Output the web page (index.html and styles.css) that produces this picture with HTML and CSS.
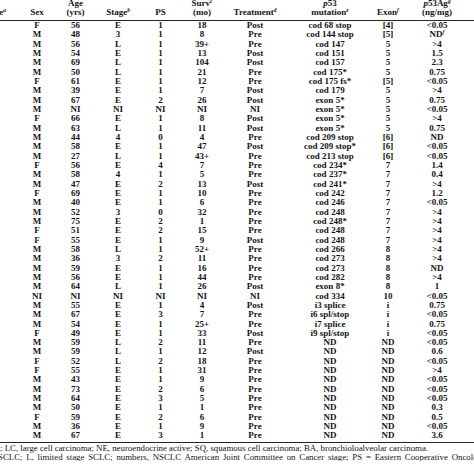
FILE: index.html
```html
<!DOCTYPE html>
<html>
<head>
<meta charset="utf-8">
<link rel="stylesheet" href="styles.css">
</head>
<body>
<div class="sheet">
  <div class="table">
    <div class="row head">
      <div class="cell clip"><span>Cell type<sup>a</sup></span></div>
      <div class="cell">Sex</div>
      <div class="cell">Age<br>(yrs)</div>
      <div class="cell">Stage<sup>b</sup></div>
      <div class="cell">PS</div>
      <div class="cell">Surv<sup>c</sup><br>(mo)</div>
      <div class="cell">Treatment<sup>d</sup></div>
      <div class="cell"><i>p</i>53<br>mutation<sup>e</sup></div>
      <div class="cell">Exon<sup>f</sup></div>
      <div class="cell"><i>p</i>53Ag<sup>g</sup><br>(ng/mg)</div>
    </div>
    <div class="body">
      <div class="row"><div class="cell"></div><div class="cell">F</div><div class="cell">56</div><div class="cell">E</div><div class="cell">1</div><div class="cell">18</div><div class="cell">Post</div><div class="cell">cod 68 stop</div><div class="cell">[4]</div><div class="cell">&lt;0.05</div></div>
      <div class="row"><div class="cell"></div><div class="cell">M</div><div class="cell">48</div><div class="cell">3</div><div class="cell">1</div><div class="cell">8</div><div class="cell">Pre</div><div class="cell">cod 144 stop</div><div class="cell">[5]</div><div class="cell">ND<sup>f</sup></div></div>
      <div class="row"><div class="cell"></div><div class="cell">M</div><div class="cell">56</div><div class="cell">L</div><div class="cell">1</div><div class="cell">39+</div><div class="cell">Pre</div><div class="cell">cod 147</div><div class="cell">5</div><div class="cell">&gt;4</div></div>
      <div class="row"><div class="cell"></div><div class="cell">M</div><div class="cell">54</div><div class="cell">E</div><div class="cell">1</div><div class="cell">13</div><div class="cell">Post</div><div class="cell">cod 151</div><div class="cell">5</div><div class="cell">1.5</div></div>
      <div class="row"><div class="cell"></div><div class="cell">M</div><div class="cell">69</div><div class="cell">L</div><div class="cell">1</div><div class="cell">104</div><div class="cell">Post</div><div class="cell">cod 157</div><div class="cell">5</div><div class="cell">2.3</div></div>
      <div class="row"><div class="cell"></div><div class="cell">M</div><div class="cell">50</div><div class="cell">L</div><div class="cell">1</div><div class="cell">21</div><div class="cell">Pre</div><div class="cell">cod 175*</div><div class="cell">5</div><div class="cell">0.75</div></div>
      <div class="row"><div class="cell"></div><div class="cell">F</div><div class="cell">61</div><div class="cell">E</div><div class="cell">1</div><div class="cell">12</div><div class="cell">Pre</div><div class="cell">cod 175 fs*</div><div class="cell">[5]</div><div class="cell">&lt;0.05</div></div>
      <div class="row"><div class="cell"></div><div class="cell">M</div><div class="cell">39</div><div class="cell">E</div><div class="cell">1</div><div class="cell">7</div><div class="cell">Post</div><div class="cell">cod 179</div><div class="cell">5</div><div class="cell">&gt;4</div></div>
      <div class="row"><div class="cell"></div><div class="cell">M</div><div class="cell">67</div><div class="cell">E</div><div class="cell">2</div><div class="cell">26</div><div class="cell">Post</div><div class="cell">exon 5*</div><div class="cell">5</div><div class="cell">0.75</div></div>
      <div class="row"><div class="cell"></div><div class="cell">M</div><div class="cell">NI</div><div class="cell">NI</div><div class="cell">NI</div><div class="cell">NI</div><div class="cell">NI</div><div class="cell">exon 5*</div><div class="cell">5</div><div class="cell">&lt;0.05</div></div>
      <div class="row"><div class="cell"></div><div class="cell">F</div><div class="cell">66</div><div class="cell">E</div><div class="cell">1</div><div class="cell">8</div><div class="cell">Post</div><div class="cell">exon 5*</div><div class="cell">5</div><div class="cell">&gt;4</div></div>
      <div class="row"><div class="cell"></div><div class="cell">M</div><div class="cell">63</div><div class="cell">L</div><div class="cell">1</div><div class="cell">11</div><div class="cell">Post</div><div class="cell">exon 5*</div><div class="cell">5</div><div class="cell">0.75</div></div>
      <div class="row"><div class="cell"></div><div class="cell">M</div><div class="cell">44</div><div class="cell">4</div><div class="cell">0</div><div class="cell">4</div><div class="cell">Pre</div><div class="cell">cod 209 stop</div><div class="cell">[6]</div><div class="cell">ND</div></div>
      <div class="row"><div class="cell"></div><div class="cell">M</div><div class="cell">58</div><div class="cell">E</div><div class="cell">1</div><div class="cell">47</div><div class="cell">Post</div><div class="cell">cod 209 stop*</div><div class="cell">[6]</div><div class="cell">&lt;0.05</div></div>
      <div class="row"><div class="cell"></div><div class="cell">M</div><div class="cell">27</div><div class="cell">L</div><div class="cell">1</div><div class="cell">43+</div><div class="cell">Pre</div><div class="cell">cod 213 stop</div><div class="cell">[6]</div><div class="cell">&lt;0.05</div></div>
      <div class="row"><div class="cell"></div><div class="cell">F</div><div class="cell">56</div><div class="cell">E</div><div class="cell">4</div><div class="cell">7</div><div class="cell">Pre</div><div class="cell">cod 234*</div><div class="cell">7</div><div class="cell">1.4</div></div>
      <div class="row"><div class="cell"></div><div class="cell">M</div><div class="cell">58</div><div class="cell">4</div><div class="cell">1</div><div class="cell">5</div><div class="cell">Pre</div><div class="cell">cod 237*</div><div class="cell">7</div><div class="cell">0.4</div></div>
      <div class="row"><div class="cell"></div><div class="cell">M</div><div class="cell">47</div><div class="cell">E</div><div class="cell">2</div><div class="cell">13</div><div class="cell">Post</div><div class="cell">cod 241*</div><div class="cell">7</div><div class="cell">&gt;4</div></div>
      <div class="row"><div class="cell"></div><div class="cell">F</div><div class="cell">69</div><div class="cell">E</div><div class="cell">1</div><div class="cell">10</div><div class="cell">Pre</div><div class="cell">cod 242</div><div class="cell">7</div><div class="cell">1.2</div></div>
      <div class="row"><div class="cell"></div><div class="cell">M</div><div class="cell">40</div><div class="cell">E</div><div class="cell">1</div><div class="cell">6</div><div class="cell">Pre</div><div class="cell">cod 246</div><div class="cell">7</div><div class="cell">&lt;0.05</div></div>
      <div class="row"><div class="cell"></div><div class="cell">M</div><div class="cell">52</div><div class="cell">3</div><div class="cell">0</div><div class="cell">32</div><div class="cell">Pre</div><div class="cell">cod 248</div><div class="cell">7</div><div class="cell">&gt;4</div></div>
      <div class="row"><div class="cell"></div><div class="cell">M</div><div class="cell">75</div><div class="cell">E</div><div class="cell">2</div><div class="cell">1</div><div class="cell">Pre</div><div class="cell">cod 248*</div><div class="cell">7</div><div class="cell">&gt;4</div></div>
      <div class="row"><div class="cell"></div><div class="cell">F</div><div class="cell">51</div><div class="cell">E</div><div class="cell">2</div><div class="cell">15</div><div class="cell">Pre</div><div class="cell">cod 248</div><div class="cell">7</div><div class="cell">&gt;4</div></div>
      <div class="row"><div class="cell"></div><div class="cell">F</div><div class="cell">55</div><div class="cell">E</div><div class="cell">1</div><div class="cell">9</div><div class="cell">Post</div><div class="cell">cod 248</div><div class="cell">7</div><div class="cell">&gt;4</div></div>
      <div class="row"><div class="cell"></div><div class="cell">M</div><div class="cell">58</div><div class="cell">L</div><div class="cell">1</div><div class="cell">52+</div><div class="cell">Pre</div><div class="cell">cod 266</div><div class="cell">8</div><div class="cell">&gt;4</div></div>
      <div class="row"><div class="cell"></div><div class="cell">M</div><div class="cell">36</div><div class="cell">3</div><div class="cell">2</div><div class="cell">11</div><div class="cell">Pre</div><div class="cell">cod 273</div><div class="cell">8</div><div class="cell">&gt;4</div></div>
      <div class="row"><div class="cell"></div><div class="cell">M</div><div class="cell">59</div><div class="cell">E</div><div class="cell">1</div><div class="cell">16</div><div class="cell">Pre</div><div class="cell">cod 273</div><div class="cell">8</div><div class="cell">ND</div></div>
      <div class="row"><div class="cell"></div><div class="cell">M</div><div class="cell">56</div><div class="cell">E</div><div class="cell">1</div><div class="cell">44</div><div class="cell">Pre</div><div class="cell">cod 282</div><div class="cell">8</div><div class="cell">&gt;4</div></div>
      <div class="row"><div class="cell"></div><div class="cell">M</div><div class="cell">64</div><div class="cell">L</div><div class="cell">1</div><div class="cell">26</div><div class="cell">Post</div><div class="cell">exon 8*</div><div class="cell">8</div><div class="cell">1</div></div>
      <div class="row"><div class="cell"></div><div class="cell">NI</div><div class="cell">NI</div><div class="cell">NI</div><div class="cell">NI</div><div class="cell">NI</div><div class="cell">NI</div><div class="cell">cod 334</div><div class="cell">10</div><div class="cell">&lt;0.05</div></div>
      <div class="row"><div class="cell"></div><div class="cell">M</div><div class="cell">55</div><div class="cell">E</div><div class="cell">1</div><div class="cell">4</div><div class="cell">Post</div><div class="cell">i3 splice</div><div class="cell">i</div><div class="cell">0.75</div></div>
      <div class="row"><div class="cell"></div><div class="cell">M</div><div class="cell">67</div><div class="cell">E</div><div class="cell">3</div><div class="cell">7</div><div class="cell">Pre</div><div class="cell">i6 spl/stop</div><div class="cell">i</div><div class="cell">&lt;0.05</div></div>
      <div class="row"><div class="cell"></div><div class="cell">M</div><div class="cell">54</div><div class="cell">E</div><div class="cell">1</div><div class="cell">25+</div><div class="cell">Pre</div><div class="cell">i7 splice</div><div class="cell">i</div><div class="cell">0.75</div></div>
      <div class="row"><div class="cell"></div><div class="cell">F</div><div class="cell">49</div><div class="cell">E</div><div class="cell">1</div><div class="cell">33</div><div class="cell">Post</div><div class="cell">i9 spl/stop</div><div class="cell">i</div><div class="cell">&lt;0.05</div></div>
      <div class="row"><div class="cell"></div><div class="cell">M</div><div class="cell">59</div><div class="cell">L</div><div class="cell">2</div><div class="cell">11</div><div class="cell">Pre</div><div class="cell">ND</div><div class="cell">ND</div><div class="cell">&lt;0.05</div></div>
      <div class="row"><div class="cell"></div><div class="cell">M</div><div class="cell">59</div><div class="cell">L</div><div class="cell">1</div><div class="cell">12</div><div class="cell">Post</div><div class="cell">ND</div><div class="cell">ND</div><div class="cell">0.6</div></div>
      <div class="row"><div class="cell"></div><div class="cell">F</div><div class="cell">52</div><div class="cell">L</div><div class="cell">2</div><div class="cell">18</div><div class="cell">Pre</div><div class="cell">ND</div><div class="cell">ND</div><div class="cell">&lt;0.05</div></div>
      <div class="row"><div class="cell"></div><div class="cell">F</div><div class="cell">55</div><div class="cell">E</div><div class="cell">1</div><div class="cell">31</div><div class="cell">Pre</div><div class="cell">ND</div><div class="cell">ND</div><div class="cell">&gt;4</div></div>
      <div class="row"><div class="cell"></div><div class="cell">M</div><div class="cell">43</div><div class="cell">E</div><div class="cell">1</div><div class="cell">9</div><div class="cell">Pre</div><div class="cell">ND</div><div class="cell">ND</div><div class="cell">&lt;0.05</div></div>
      <div class="row"><div class="cell"></div><div class="cell">M</div><div class="cell">73</div><div class="cell">E</div><div class="cell">2</div><div class="cell">6</div><div class="cell">Pre</div><div class="cell">ND</div><div class="cell">ND</div><div class="cell">&lt;0.05</div></div>
      <div class="row"><div class="cell"></div><div class="cell">M</div><div class="cell">64</div><div class="cell">E</div><div class="cell">3</div><div class="cell">5</div><div class="cell">Pre</div><div class="cell">ND</div><div class="cell">ND</div><div class="cell">&lt;0.05</div></div>
      <div class="row"><div class="cell"></div><div class="cell">M</div><div class="cell">50</div><div class="cell">E</div><div class="cell">1</div><div class="cell">1</div><div class="cell">Pre</div><div class="cell">ND</div><div class="cell">ND</div><div class="cell">0.3</div></div>
      <div class="row"><div class="cell"></div><div class="cell">F</div><div class="cell">59</div><div class="cell">E</div><div class="cell">2</div><div class="cell">6</div><div class="cell">Pre</div><div class="cell">ND</div><div class="cell">ND</div><div class="cell">0.5</div></div>
      <div class="row"><div class="cell"></div><div class="cell">M</div><div class="cell">36</div><div class="cell">E</div><div class="cell">1</div><div class="cell">9</div><div class="cell">Pre</div><div class="cell">ND</div><div class="cell">ND</div><div class="cell">&lt;0.05</div></div>
      <div class="row"><div class="cell"></div><div class="cell">M</div><div class="cell">67</div><div class="cell">E</div><div class="cell">3</div><div class="cell">1</div><div class="cell">Pre</div><div class="cell">ND</div><div class="cell">ND</div><div class="cell">3.6</div></div>
    </div>
  </div>
  <div class="notes">
    <p class="note">; LC, large cell carcinoma; NE, neuroendocrine active; SQ, squamous cell carcinoma; BA, bronchioloalveolar carcinoma.</p>
    <p class="note second">SCLC; L, limited stage SCLC; numbers, NSCLC American Joint Committee on Cancer stage; PS = Eastern Cooperative Oncology Group performance status.</p>
  </div>
</div>
</body>
</html>
```
FILE: styles.css
```css
html, body {
  margin: 0;
  padding: 0;
  background: #ffffff;
}
body {
  width: 474px;
  height: 474px;
  overflow: hidden;
  font-family: "Liberation Serif", "Times New Roman", serif;
  color: #141414;
}
.sheet {
  width: 474px;
  overflow: hidden;
}
.table {
  margin-top: -1.5px;
}
.row {
  display: grid;
  grid-template-columns: 18px 38px 39px 46px 39px 44px 62px 88px 28px 70px;
  height: 9.34px;
  font-size: 9px;
  font-weight: bold;
  line-height: 9.34px;
  white-space: nowrap;
}
.cell {
  text-align: center;
}
.head {
  height: auto;
  align-items: end;
  line-height: 9.5px;
  padding-bottom: 2.5px;
  border-bottom: 1.6px solid #262626;
}
.clip {
  display: flex;
  justify-content: flex-end;
  overflow: hidden;
  padding-right: 12px;
}
.body {
  padding-bottom: 1.5px;
  border-bottom: 1.6px solid #262626;
}
sup {
  font-size: 5.5px;
  font-style: italic;
  line-height: 0;
  vertical-align: 3px;
}
i {
  font-style: italic;
}
.notes {
  font-size: 8.8px;
  line-height: 8.6px;
  white-space: nowrap;
  padding-top: 1px;
}
.note {
  margin: 0;
}
.second {
  text-indent: -2px;
  word-spacing: 1.6px;
}
```
